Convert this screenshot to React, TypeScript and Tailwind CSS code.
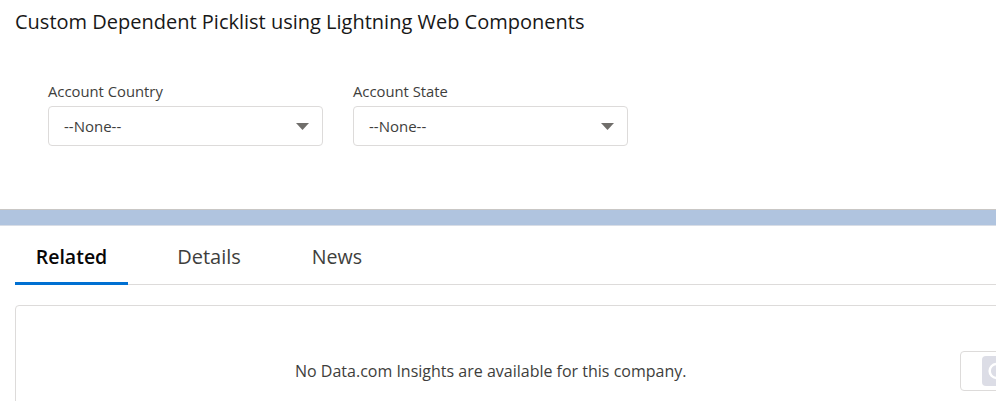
import React from "react";

function Select() {
  return (
    <div className="relative flex h-[40px] w-[275px] items-center rounded-[4px] border border-[#dddbda] bg-white pl-[15px] text-[15px] text-[#3e3e3c]">
      <span>--None--</span>
      <svg className="absolute right-[13px] top-[16px]" width="13" height="7" viewBox="0 0 13 7">
        <path d="M0 0 L13 0 L6.5 7 Z" fill="#706e6b" />
      </svg>
    </div>
  );
}

export default function App() {
  return (
    <div className="relative h-[401px] w-[996px] overflow-hidden bg-white" style={{ fontFamily: '"Open Sans", "Liberation Sans", sans-serif' }}>
      <div className="h-[209px]">
        <div className="pl-[15px] pt-[8px] text-[20px] leading-[28px] text-[#181818]">
          Custom Dependent Picklist using Lightning Web Components
        </div>
        <div className="mt-[45px] flex gap-[30px] pl-[48px]">
          <div className="flex flex-col">
            <label className="mb-[5px] text-[14.8px] leading-[20px] text-[#3e3e3c]">Account Country</label>
            <Select />
          </div>
          <div className="flex flex-col">
            <label className="mb-[5px] text-[14.8px] leading-[20px] text-[#3e3e3c]">Account State</label>
            <Select />
          </div>
        </div>
      </div>
      <div className="h-[17px] border-t border-b border-t-[#c9c7c5] border-b-[#d8dde6] bg-[#b0c4df]" />
      <div className="pl-[15px]">
        <div className="flex h-[59px] w-[1000px] items-end border-b border-[#dddbda]">
          <div className="relative flex h-full w-[113px] items-center justify-center text-[19.5px] font-semibold text-[#080707]">
            <span className="pt-[3px]">Related</span>
            <div className="absolute bottom-[-1px] left-0 right-0 h-[3px] bg-[#0070d2]" />
          </div>
          <div className="flex h-full w-[162px] items-center justify-center pt-[3px] text-[20px] text-[#3e3e3c]">Details</div>
          <div className="flex h-full w-[94px] items-center justify-center pt-[3px] text-[19.6px] text-[#3e3e3c]">News</div>
        </div>
        <div className="mt-[20px] h-[120px] w-[1000px] rounded-[4px] border border-[#dddbda]">
          <div className="pl-[279px] pt-[54px] text-[16px] leading-[22px] text-[#3e3e3c]">
            No Data.com Insights are available for this company.
          </div>
        </div>
      </div>
      <div className="absolute left-[960px] top-[351px] flex h-[40px] w-[60px] items-center rounded-[4px] border border-[#dddbda] bg-white pl-[21px]">
        <svg width="30" height="30" viewBox="0 0 30 30">
          <rect x="0" y="0" width="30" height="30" rx="4" fill="#dcdde6" />
          <path d="M19 9.5 A7 7 0 1 0 19 20.5" stroke="#ffffff" strokeWidth="2.5" fill="none" />
        </svg>
      </div>
    </div>
  );
}
